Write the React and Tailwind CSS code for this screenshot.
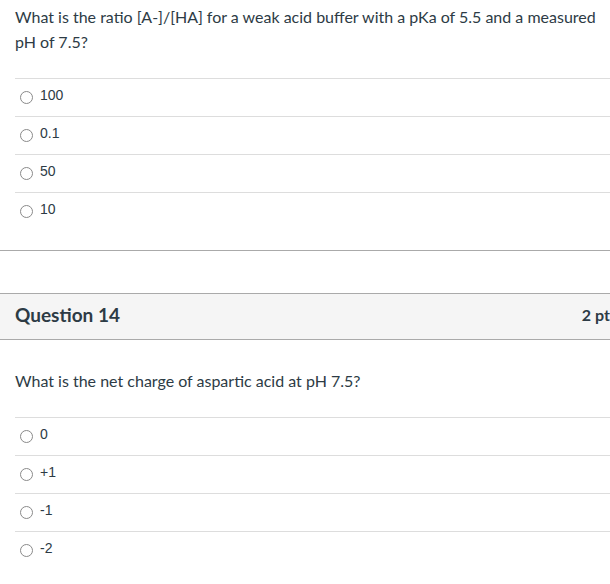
import React from "react";

const questionOne = ["100", "0.1", "50", "10"];
const questionTwo = ["0", "+1", "-1", "-2"];

const Answers = ({ items }) => (
  <div className="ml-[15px] mt-[24px]">
    {items.map((a) => (
      <label
        key={a}
        className="flex items-start h-[38px] border-t border-[#dddddd] pt-[7px] cursor-pointer"
      >
        <span className="ml-[5px] mt-[5px] mr-[7px] w-[13px] h-[13px] rounded-full border border-[#8a8a8a] bg-white shrink-0"></span>
        <span className="text-[14px] leading-[18px] text-[#2d3b45] font-['Liberation_Sans',Arial,sans-serif]">
          {a}
        </span>
      </label>
    ))}
  </div>
);

export default function App() {
  return (
    <div className="w-full overflow-hidden bg-white">
      <div className="w-[632px] text-[#2d3b45] font-['Lato','Noto_Sans',sans-serif]">
        <p className="pl-[15px] pr-[12px] pt-[4px] text-[16px] leading-[25px]">
          What is the ratio [A-]/[HA] for a weak acid buffer with a pKa of 5.5 and a measured pH of 7.5?
        </p>
        <Answers items={questionOne} />

        <div className="mt-[20px] border-t border-[#aaaaaa]"></div>

        <div className="mt-[42px] h-[47px] border-y border-[#aaaaaa] bg-[#f5f5f5] px-[15px] pb-[3px] flex items-center justify-between">
          <h2 className="text-[19px] font-bold">Question 14</h2>
          <span className="text-[16px] font-bold">2 pts</span>
        </div>

        <p className="px-[15px] mt-[28px] text-[16px] leading-[25px]">
          What is the net charge of aspartic acid at pH 7.5?
        </p>
        <Answers items={questionTwo} />
      </div>
    </div>
  );
}
